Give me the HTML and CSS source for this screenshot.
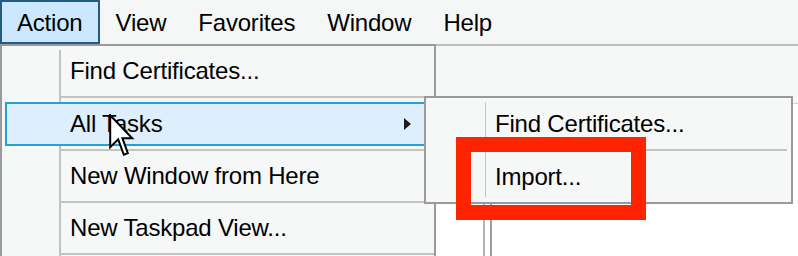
FILE: index.html
```html
<!DOCTYPE html>
<html>
<head>
<meta charset="utf-8">
<title>Certificates - Action menu</title>
<link rel="stylesheet" href="styles.css">
</head>
<body>
<div class="window">
  <nav class="menubar">
    <span class="mb-item open">Action</span>
    <span class="mb-item">View</span>
    <span class="mb-item">Favorites</span>
    <span class="mb-item">Window</span>
    <span class="mb-item">Help</span>
  </nav>
  <div class="toolbar"></div>
  <div class="content">
    <div class="pane-left"></div>
    <div class="pane-gap"></div>
    <div class="pane-right"></div>
  </div>

  <div class="menu dropdown">
    <div class="item">Find Certificates...</div>
    <div class="sep"></div>
    <div class="item active"><span class="label">All Tasks</span><span class="arrow"></span></div>
    <div class="sep"></div>
    <div class="item">New Window from Here</div>
    <div class="sep"></div>
    <div class="item">New Taskpad View...</div>
    <div class="sep"></div>
  </div>

  <div class="menu submenu">
    <div class="sub-item">Find Certificates...</div>
    <div class="sub-sep"></div>
    <div class="sub-item">Import...</div>
  </div>

  <div class="callout"></div>

  <svg class="cursor" viewBox="0 0 13 22" width="26" height="44" aria-hidden="true">
    <path d="M0.6 0.6 L0.6 16.6 L4.6 12.7 L7.4 20.4 L9.4 19.6 L6.7 12.1 L11.6 12.1 Z" fill="#ffffff" stroke="#000000" stroke-width="1" stroke-linejoin="miter"/>
  </svg>
</div>
</body>
</html>
```

FILE: styles.css
```css
html, body {
  margin: 0;
  padding: 0;
}

body {
  width: 798px;
  height: 256px;
  overflow: hidden;
  background: #ffffff;
  font-family: "Liberation Sans", Arial, sans-serif;
  font-size: 24px;
  letter-spacing: -0.2px;
  color: #000000;
}

.window {
  position: relative;
  width: 798px;
  height: 256px;
  display: flex;
  flex-direction: column;
}

/* ---------- menu bar ---------- */
.menubar {
  display: flex;
  height: 44px;
  background: #f5f7f7;
  border-bottom: 2px solid #bcbfba;
  flex: none;
}

.mb-item {
  box-sizing: border-box;
  height: 44px;
  padding: 2px 16px 0 16px;
  line-height: 42px;
  white-space: nowrap;
}

.mb-item.open {
  padding: 1px 15px 0 15px;
  line-height: 39px;
  background: #cce8ff;
  border: 2px solid #235b87;
}

/* ---------- background window ---------- */
.toolbar {
  height: 57px;
  background: #f6f8f8;
  border-bottom: 1px solid #d3d6d2;
  flex: none;
}

.content {
  flex: 1;
  display: flex;
  background: #ffffff;
}

.pane-left {
  width: 483px;
  border-right: 2px solid #b4b4b2;
}

.pane-gap {
  width: 5px;
}

.pane-right {
  flex: 1;
  border-left: 2px solid #9c9c9c;
}

/* ---------- menus ---------- */
.menu {
  position: absolute;
  box-sizing: border-box;
  background-color: #f6f8f8;
  border: 2px solid #9a9a9a;
}

.dropdown {
  left: 0;
  top: 44px;
  width: 436px;
  height: 224px;
  border-bottom: none;
  background-image: linear-gradient(to right, transparent 57px, #c3c3bf 57px, #c3c3bf 59px, transparent 59px);
  background-repeat: no-repeat;
  background-position: 0 4px;
}

.item {
  display: flex;
  align-items: center;
  height: 50px;
  line-height: 50px;
  padding-left: 68px;
  white-space: nowrap;
}

.item.active {
  height: 40px;
  line-height: 40px;
  margin: 4px 3px 3px 3px;
  padding-left: 63px;
  border: 2px solid #26a0da;
  background: #ddeffd;
}

.label {
  flex: 1;
}

.arrow {
  width: 0;
  height: 0;
  margin-right: 18px;
  border-left: 7px solid #1c1c1c;
  border-top: 6px solid transparent;
  border-bottom: 6px solid transparent;
}

.sep {
  height: 2px;
  margin-left: 59px;
  background: #c3c3bf;
}

.submenu {
  left: 424px;
  top: 96px;
  width: 369px;
  height: 108px;
  background-image: linear-gradient(to right, transparent 59px, #c6c6c2 59px, #c6c6c2 60.5px, transparent 60.5px);
  background-repeat: no-repeat;
  background-position: 0 4px;
  background-size: 100% 95px;
}

.sub-item {
  height: 51px;
  line-height: 51px;
  padding-left: 69px;
  white-space: nowrap;
}

.sub-sep {
  height: 2px;
  margin: 0 4px 0 61px;
  background: #c3c3bf;
}

/* ---------- annotation & pointer overlays ---------- */
.callout {
  position: absolute;
  left: 456px;
  top: 137px;
  width: 190px;
  height: 83px;
  box-sizing: border-box;
  border: 15px solid #fe2401;
}

.cursor {
  position: absolute;
  left: 109px;
  top: 114px;
}
```
